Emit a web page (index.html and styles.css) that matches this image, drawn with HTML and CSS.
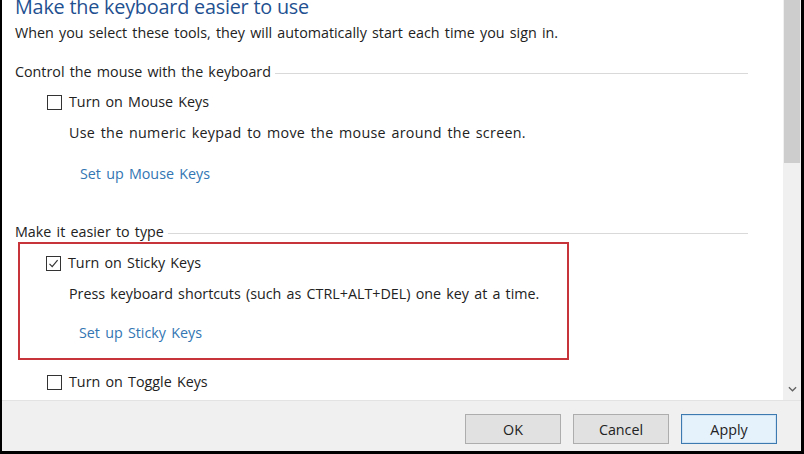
FILE: index.html
```html
<!DOCTYPE html>
<html>
<head>
<meta charset="utf-8">
<link rel="stylesheet" href="styles.css">
</head>
<body>
<div class="window">
  <div class="content">
    <div class="main">
      <h1 class="title">Make the keyboard easier to use</h1>
      <p class="subtitle">When you select these tools, they will automatically start each time you sign in.</p>

      <div class="group-head group-mouse"><span>Control the mouse with the keyboard</span><i class="rule"></i></div>
      <div class="check-row row-mouse"><span class="box"></span><span>Turn on Mouse Keys</span></div>
      <p class="desc desc-mouse">Use the numeric keypad to move the mouse around the screen.</p>
      <a class="link link-mouse">Set up Mouse Keys</a>

      <div class="group-head group-type"><span>Make it easier to type</span><i class="rule"></i></div>
      <div class="highlight">
        <div class="check-row row-sticky"><span class="box checked"><svg viewBox="0 0 13 13" width="13" height="13"><path d="M2.5 6.8 L5.2 9.6 L10.6 3.2" fill="none" stroke="#333" stroke-width="1.2"/></svg></span><span>Turn on Sticky Keys</span></div>
        <p class="desc desc-sticky">Press keyboard shortcuts (such as CTRL+ALT+DEL) one key at a time.</p>
        <a class="link link-sticky">Set up Sticky Keys</a>
      </div>
      <div class="check-row row-toggle"><span class="box"></span><span>Turn on Toggle Keys</span></div>
    </div>
    <div class="scrollbar">
      <div class="thumb"></div>
      <div class="track"></div>
      <div class="arrow"><svg viewBox="0 0 10 6" width="9" height="6"><path d="M1 1 L5 5 L9 1" fill="none" stroke="#606060" stroke-width="1.4"/></svg></div>
    </div>
  </div>
  <div class="footer">
    <button class="btn">OK</button>
    <button class="btn">Cancel</button>
    <button class="btn primary">Apply</button>
  </div>
</div>
</body>
</html>
```

FILE: styles.css
```css
html, body {
  margin: 0;
  padding: 0;
  background: #000;
}
body {
  width: 804px;
  height: 454px;
  overflow: hidden;
  font-family: "Open Sans", "Noto Sans", sans-serif;
  color: #1a1a1a;
}
.window {
  margin: 0 3px 0 2px;
  width: 799px;
  height: 451px;
  background: #fff;
  display: flex;
  flex-direction: column;
}
.content {
  display: flex;
  height: 400px;
}
.main {
  flex: 1;
  padding-left: 13px;
  font-size: 14.3px;
  word-spacing: 1.5px;
}
.title {
  margin: -6px 0 0 0;
  font-size: 19.8px;
  font-weight: 400;
  color: #1f5191;
  line-height: 26px;
  letter-spacing: -0.2px;
  word-spacing: 0;
}
.subtitle {
  margin: 3px 0 0 0;
  line-height: 20px;
  color: #222;
}
.group-head {
  display: flex;
  align-items: center;
  width: 733px;
  line-height: 20px;
  color: #222;
}
.group-head .rule {
  flex: 1;
  height: 1px;
  background: #d9d9d9;
  margin-left: 4px;
  margin-top: 2px;
}
.group-mouse { margin-top: 19px; }
.check-row {
  display: flex;
  align-items: center;
  margin-left: 32px;
  line-height: 20px;
  color: #222;
}
.box {
  width: 13px;
  height: 13px;
  border: 1px solid #333;
  background: #fff;
  margin-right: 7px;
  display: flex;
}
.row-mouse { margin-top: 10px; }
.desc {
  margin: 11px 0 0 54px;
  line-height: 20px;
  color: #222;
}
.desc-mouse { letter-spacing: 0.3px; }
.link {
  display: block;
  margin: 21px 0 0 65px;
  line-height: 20px;
  color: #3376b3;
}
.group-type { margin-top: 38px; }
.highlight {
  margin: 0 0 0 3px;
  width: 551px;
  height: 118px;
  border: 2px solid #c7343a;
  padding-top: 9px;
  box-sizing: border-box;
}
.highlight .check-row { margin-left: 26px; }
.highlight .desc { margin-left: 49px; margin-top: 11px; }
.highlight .link { margin-left: 59px; margin-top: 19px; }
.row-toggle { margin-top: 12px; }
.scrollbar {
  width: 18px;
  display: flex;
  flex-direction: column;
  background: #f0f0f0;
}
.thumb {
  height: 163px;
  background: #cdcdcd;
  margin: 0 1px;
}
.track { flex: 1; }
.arrow {
  height: 22px;
  display: flex;
  align-items: center;
  justify-content: center;
  margin-bottom: 0;
}
.footer {
  flex: 1;
  background: #f0f0f0;
  border-top: 1px solid #e3e3e3;
  display: flex;
  justify-content: flex-end;
  align-items: flex-start;
  gap: 12px;
  padding: 13px 24px 0 0;
}
.btn {
  width: 96px;
  height: 30px;
  font-family: "Open Sans", "Noto Sans", sans-serif;
  font-size: 14.3px;
  color: #222;
  background: #e1e1e1;
  border: 1px solid #adadad;
  padding: 0;
}
.btn.primary {
  background: #e5f1fb;
  border: 1px solid #3d7ab0;
  box-shadow: inset 0 0 0 1px #cfe3f4;
}
```
